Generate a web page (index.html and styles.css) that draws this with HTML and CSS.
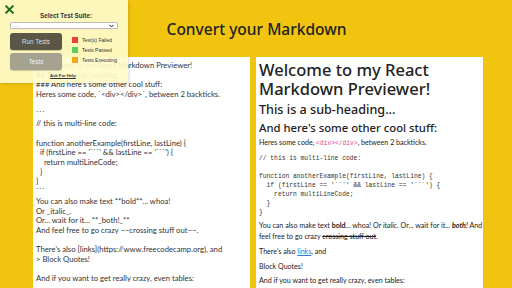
FILE: index.html
```html
<!DOCTYPE html>
<html>
<head>
<meta charset="utf-8">
<link rel="stylesheet" href="styles.css">
</head>
<body>
<div class="suite">
  <div class="suite-close">
    <svg width="9" height="9" viewBox="0 0 10 10"><path d="M1.5 1.5 L8.5 8.5 M8.5 1.5 L1.5 8.5" stroke="#1f6b1f" stroke-width="2.2" stroke-linecap="square"/></svg>
  </div>
  <div class="suite-label">Select Test Suite:</div>
  <div class="suite-select"><span>- - -</span><svg width="5" height="4" viewBox="0 0 10 8"><path d="M1 1.5 L5 6 L9 1.5" fill="none" stroke="#222" stroke-width="2"/></svg></div>
  <div class="suite-body">
    <div class="suite-buttons">
      <div class="btn btn-run">Run Tests</div>
      <div class="btn btn-tests">Tests</div>
    </div>
    <div class="legend">
      <div class="legend-row"><span class="sq sq-red"></span>Test(s) Failed</div>
      <div class="legend-row"><span class="sq sq-green"></span>Tests Passed</div>
      <div class="legend-row"><span class="sq sq-orange"></span>Tests Executing</div>
    </div>
  </div>
  <div class="suite-help">Ask For Help</div>
</div>

<header class="title">Convert your Markdown</header>

<main class="panes">
  <div class="editor"># Welcome to my React Markdown Previewer!
## This is a sub-heading...
### And here's some other cool stuff:
Heres some code, &#96;&lt;div&gt;&lt;/div&gt;&#96;, between 2 backticks.

&#96;&#96;&#96;
// this is multi-line code:

function anotherExample(firstLine, lastLine) {
  if (firstLine == '&#96;&#96;&#96;' &amp;&amp; lastLine == '&#96;&#96;&#96;') {
    return multiLineCode;
  }
}
&#96;&#96;&#96;
You can also make text **bold**... whoa!
Or _italic_.
Or... wait for it... **_both!_**
And feel free to go crazy ~~crossing stuff out~~.

There's also [links](https://www.freecodecamp.org), and
&gt; Block Quotes!

And if you want to get really crazy, even tables:</div>
  <div class="preview">
    <h1 class="pv-h1">Welcome to my React Markdown Previewer!</h1>
    <h2 class="pv-h2">This is a sub-heading...</h2>
    <h3 class="pv-h3">And here's some other cool stuff:</h3>
    <p class="pv-p">Heres some code, <code class="pv-code">&lt;div&gt;&lt;/div&gt;</code>, between 2 backticks.</p>
    <pre class="pv-pre">// this is multi-line code:

function anotherExample(firstLine, lastLine) {
  if (firstLine == '&#96;&#96;&#96;' &amp;&amp; lastLine == '&#96;&#96;&#96;') {
    return multiLineCode;
  }
}</pre>
    <p class="pv-p">You can also make text <b>bold</b>... whoa! Or <i>italic</i>. Or... wait for it... <b><i>both!</i></b> And feel free to go crazy <s>crossing stuff out</s>.</p>
    <p class="pv-p">There's also <a class="pv-link" href="#">links</a>, and</p>
    <blockquote class="pv-quote">Block Quotes!</blockquote>
    <p class="pv-p">And if you want to get really crazy, even tables:</p>
  </div>
</main>
</body>
</html>
```
FILE: styles.css
```css
html, body {
  margin: 0;
  padding: 0;
}
body {
  width: 512px;
  height: 288px;
  overflow: hidden;
  background: #f1c40f;
  font-family: "Noto Sans", "Open Sans", sans-serif;
  color: #222;
}

.title {
  height: 57px;
  display: flex;
  align-items: center;
  justify-content: center;
  font-size: 15.5px;
  font-weight: 500;
  color: #222;
  padding-left: 1px;
  box-sizing: border-box;
}

.panes {
  display: flex;
  gap: 6px;
  padding-left: 33px;
  align-items: flex-start;
}

.editor {
  width: 217px;
  height: 240px;
  box-sizing: border-box;
  background: #fff;
  padding: 4px 3px;
  white-space: pre-wrap;
  font-family: Lato, "Noto Sans", sans-serif;
  font-size: 7.7px;
  line-height: 9.7px;
  color: #333;
}

.preview {
  width: 227px;
  height: 240px;
  box-sizing: border-box;
  background: #fff;
  padding: 4px 0 4px 3px;
  color: #222;
}

.pv-h1 {
  margin: 0;
  font-size: 16.5px;
  line-height: 18.5px;
  font-weight: 500;
}
.pv-h2 {
  margin: 4px 0 0;
  font-size: 12.6px;
  line-height: 16px;
  font-weight: 500;
}
.pv-h3 {
  margin: 3px 0 0;
  font-size: 11.3px;
  line-height: 14px;
  font-weight: 500;
}
.pv-p {
  margin: 2px 0 4px;
  font-family: Lato, "Noto Sans", sans-serif;
  font-size: 7.1px;
  line-height: 11px;
}
.pv-code {
  font-family: "Liberation Mono", monospace;
  font-size: 6.3px;
  color: #e83e8c;
}
.pv-pre {
  margin: 5px 0 3px;
  font-family: "Liberation Mono", monospace;
  font-size: 6.3px;
  line-height: 9px;
  color: #333;
}
.pv-link {
  color: #2a7ae2;
  text-decoration: underline;
}
.pv-quote {
  margin: 0 0 3px;
  font-family: Lato, "Noto Sans", sans-serif;
  font-size: 7.1px;
  line-height: 11px;
}

/* test suite overlay */
.suite {
  position: absolute;
  left: 0;
  top: 0;
  width: 128px;
  height: 83px;
  box-sizing: border-box;
  background: rgba(255, 251, 200, 0.93);
  box-shadow: 1px 1px 3px rgba(0, 0, 0, 0.15);
  padding: 6px 10px 0;
  font-family: "Liberation Sans", Arial, sans-serif;
  display: flex;
  flex-direction: column;
}
.suite-close {
  position: absolute;
  left: 5px;
  top: 5px;
  line-height: 0;
}
.suite-label {
  text-align: center;
  font-size: 6.3px;
  font-weight: bold;
  color: #333;
  margin-top: 6px;
  margin-left: 4px;
}
.suite-select {
  margin-top: 3px;
  height: 7px;
  width: 108px;
  box-sizing: border-box;
  background: #fff;
  border: 1px solid #bbb;
  border-radius: 1px;
  display: flex;
  align-items: center;
  justify-content: space-between;
  padding: 0 3px 0 2px;
  font-size: 4px;
  color: #555;
}
.suite-body {
  display: flex;
  margin-top: 4px;
  gap: 10px;
}
.suite-buttons {
  display: flex;
  flex-direction: column;
  gap: 3px;
}
.btn {
  width: 52px;
  height: 17px;
  border-radius: 3px;
  display: flex;
  align-items: center;
  justify-content: center;
  font-size: 6.3px;
  box-shadow: 0 1px 1px rgba(0, 0, 0, 0.2);
}
.btn-run {
  background: #5b5746;
  color: #ddd;
}
.btn-tests {
  background: #a6a290;
  color: #f2f2f2;
}
.legend {
  display: flex;
  flex-direction: column;
  gap: 4px;
  padding-top: 4px;
}
.legend-row {
  display: flex;
  align-items: center;
  gap: 4px;
  font-size: 5px;
  color: #333;
  height: 6px;
}
.sq {
  width: 6px;
  height: 6px;
  display: inline-block;
}
.sq-red { background: #e8413b; }
.sq-green { background: #5ccf5c; }
.sq-orange { background: #f5a31a; }
.suite-help {
  margin-top: 3px;
  padding-left: 40px;
  font-size: 4.2px;
  font-weight: bold;
  color: #333;
  text-decoration: underline;
}
```
